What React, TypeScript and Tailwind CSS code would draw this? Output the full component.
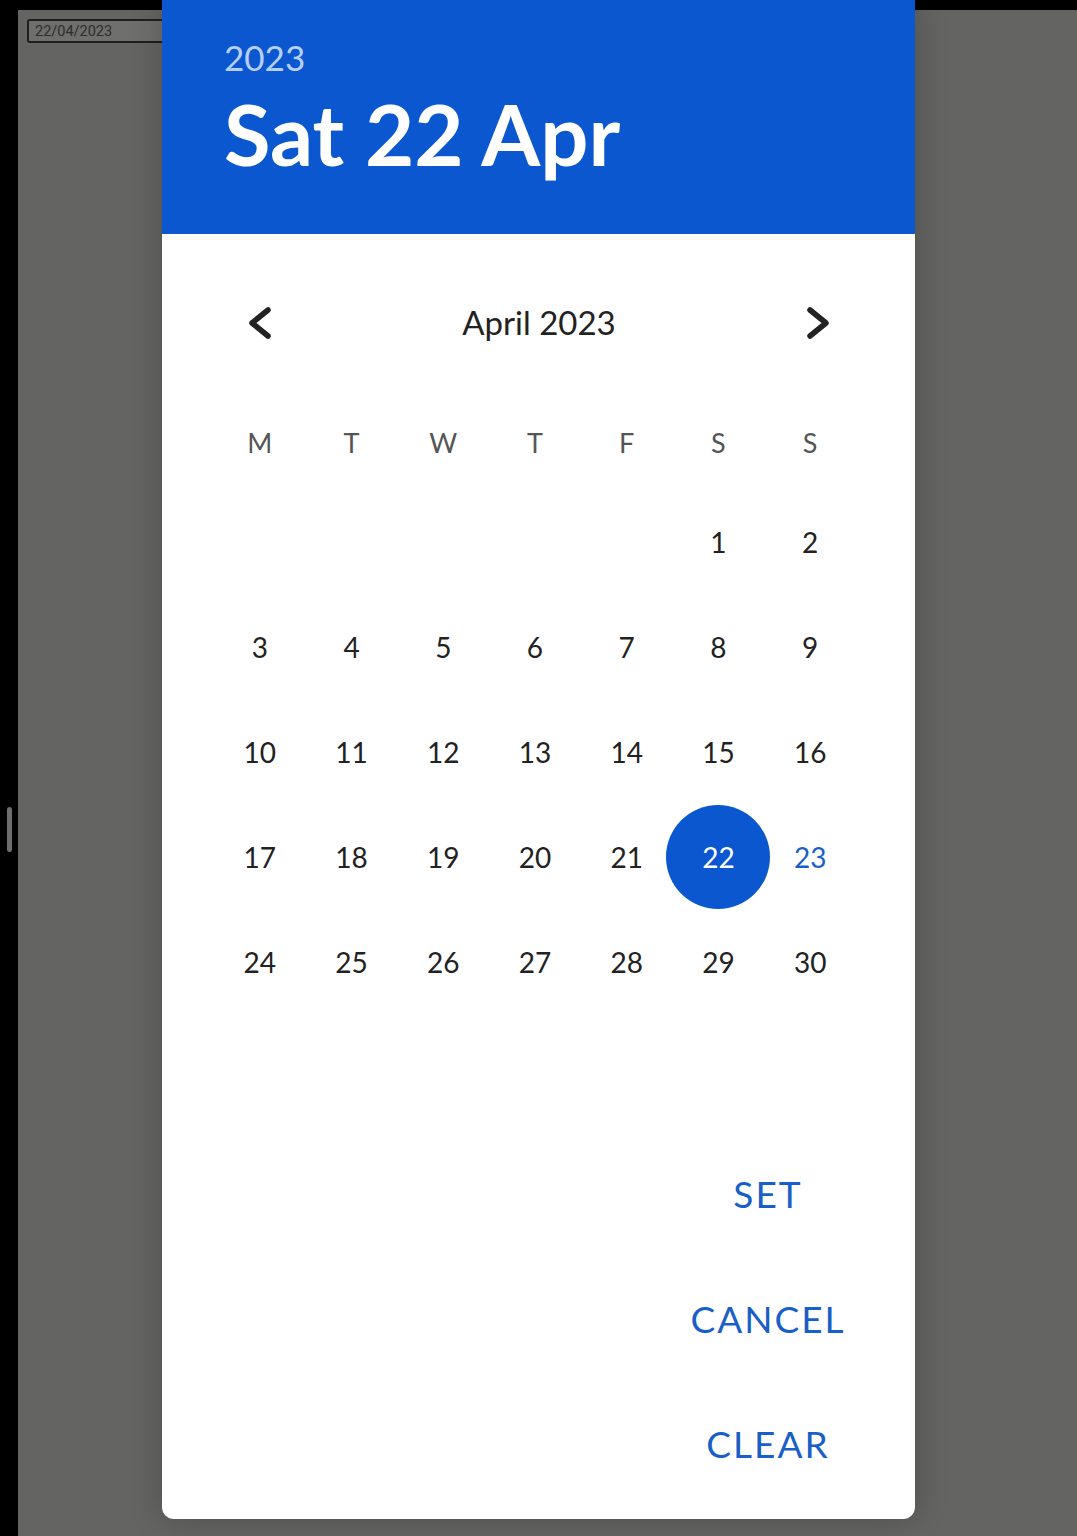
const weekdays = ["M", "T", "W", "T", "F", "S", "S"];

// April 2023 starts on a Saturday, so five empty cells first
const days: (number | null)[] = [
  null, null, null, null, null,
  ...Array.from({ length: 30 }, (_, i) => i + 1),
];

const font = "font-['Lato',sans-serif]";

function Chevron({ flip }: { flip?: boolean }) {
  return (
    <svg width="32" height="40" viewBox="0 0 32 40" fill="none" className={flip ? "rotate-180" : ""}>
      <path d="M23 7 L7 20 L23 33" stroke="#222222" strokeWidth="5.5" strokeLinecap="round" strokeLinejoin="round" />
    </svg>
  );
}

function DayCell({ day }: { day: number | null }) {
  if (day === null) return <div className="h-[104.8px]" />;
  if (day === 22) {
    return (
      <div className="flex h-[104.8px] items-center justify-center">
        <div className="flex h-[104px] w-[104px] shrink-0 items-center justify-center rounded-full bg-[#0b57d0] text-[28px] text-white">
          22
        </div>
      </div>
    );
  }
  return (
    <div className={`flex h-[104.8px] items-center justify-center text-[28px] ${day === 23 ? "text-[#1a5fc8]" : "text-[#222222]"}`}>
      {day}
    </div>
  );
}

export default function App() {
  return (
    <div className={`relative flex h-[1536px] w-[1077px] overflow-hidden bg-black ${font}`}>
      {/* left rail with drag handle */}
      <div className="flex h-full w-[18px] shrink-0 flex-col items-center pt-[807px]">
        <div className="h-[45px] w-[5px] rounded-full bg-[#6e6e6e]" />
      </div>

      <div className="flex min-w-0 flex-1 flex-col pt-[10px]">
        <div className="flex-1 bg-[#646562] pt-[9px] pl-[9px]">
          <div className="flex h-[24px] w-[200px] items-center rounded-[3px] border-2 border-[#1f1f1f] bg-[#6f6f6d] pt-[1px] pl-[6px] font-['Roboto',sans-serif] text-[14.5px] text-[#2c2c2c]">
            22/04/2023
          </div>
        </div>
      </div>

      {/* date picker dialog */}
      <div className="absolute top-0 left-[162px] flex h-[1519px] w-[753px] flex-col overflow-hidden rounded-b-[12px] bg-white shadow-[0_0_32px_rgba(0,0,0,0.22)]">
        <div className="flex h-[234px] shrink-0 flex-col bg-[#0b57d0] pt-[34px] pl-[62px]">
          <div className="text-[35px] leading-[46px] text-[#b7cff6]">2023</div>
          <div className="mt-[7px] text-[85px] leading-[92px] font-bold text-white">Sat 22 Apr</div>
        </div>

        <div className="flex flex-1 flex-col pl-[52px] pr-[59px]">
          <div className="mt-[64px] flex h-[50px] items-center justify-between pl-[31px] pr-[23px]">
            <Chevron />
            <span className="text-[33px] text-[#222222]">April 2023</span>
            <Chevron flip />
          </div>

          <div className="mt-[80px] grid grid-cols-7">
            {weekdays.map((d, i) => (
              <div key={i} className="flex h-[30px] items-center justify-center text-[27px] text-[#555555]">
                {d}
              </div>
            ))}
          </div>

          <div className="mt-[32px] grid grid-cols-7">
            {days.map((d, i) => (
              <DayCell key={i} day={d} />
            ))}
          </div>

          <div className="mt-[117px] flex flex-col items-center self-end pr-[8px]">
            {["SET", "CANCEL", "CLEAR"].map((label) => (
              <button key={label} className="flex h-[125px] w-[160px] items-center justify-center text-[37px] tracking-[2px] text-[#1a5fc8]">
                {label}
              </button>
            ))}
          </div>
        </div>
      </div>
    </div>
  );
}
